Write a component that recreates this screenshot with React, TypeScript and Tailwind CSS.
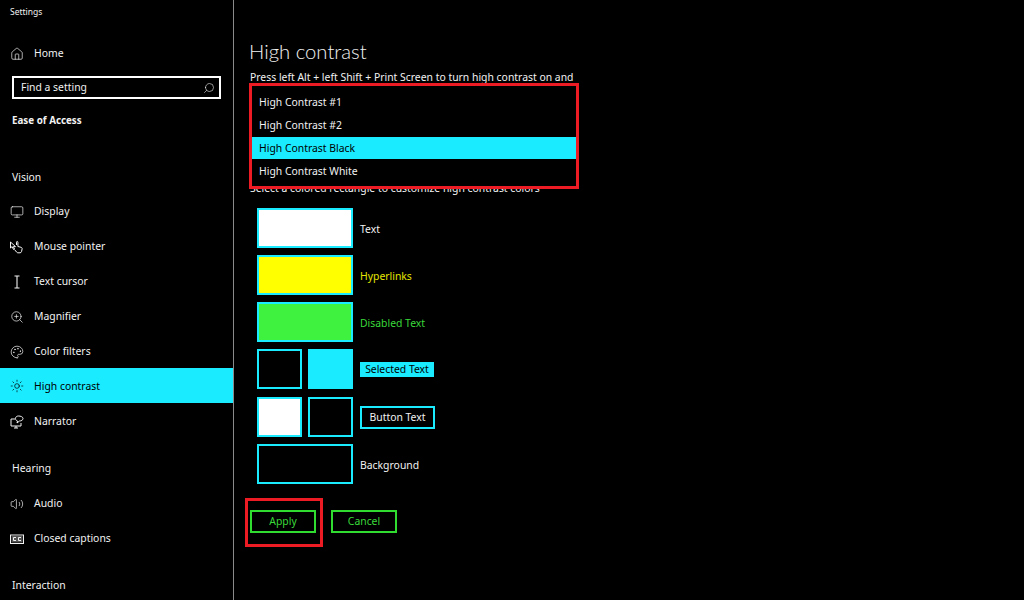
import type { ReactNode } from 'react';
import { House, Monitor, ZoomIn, Palette, Sun, Volume2, Search } from 'lucide-react';

function PointerIcon() {
  return (
    <svg width="14" height="14" viewBox="0 0 14 14" fill="none" stroke="currentColor" strokeWidth="1">
      <path d="M0.500 2v6l1.600-1.400L3.500 9.500l1-.5-1.200-2.400h2.200z" />
      <path d="M6.500 5V2.200c0-1 1.400-1 1.400 0V6.500l3.200.8c.9.3 1.200.9 1 1.700l-.6 2.700c-.2.7-.8 1.100-1.500 1.100H8c-.6 0-1-.2-1.400-.7L4.500 9.500" />
    </svg>
  );
}

function CursorIcon() {
  return (
    <svg width="14" height="14" viewBox="0 0 14 14" fill="none" stroke="currentColor" strokeWidth="1.100">
      <path d="M4.500 1h5M7 1v12M4.500 13h5" />
    </svg>
  );
}

function NarratorIcon() {
  return (
    <svg width="14" height="14" viewBox="0 0 14 14" fill="none" stroke="currentColor" strokeWidth="1">
      <path d="M5 4H1v7h10V8" />
      <path d="M4 13h4M6 11v2" />
      <path d="M8.500 1C6.800 1 5.500 2 5.500 3.500S6.800 6 7.500 6L7 8l2.500-2c1.700 0 3.500-.8 3.500-2.500S10.500 1 8.500 1z" />
    </svg>
  );
}

function CaptionsIcon() {
  return (
    <svg width="14" height="14" viewBox="0 0 14 14" fill="none" stroke="currentColor" strokeWidth="1">
      <rect x="0.500" y="3" width="13" height="8.500" />
      <rect x="1.500" y="4" width="11" height="6.500" fill="currentColor" fillOpacity="0.35" stroke="none" />
      <path d="M6 5.500H3.500v3H6M11 5.500H8.500v3H11" />
    </svg>
  );
}

function NavRow({ icon, label, active }: { icon: ReactNode; label: string; active?: boolean }) {
  return (
    <div className={`flex h-[35px] items-center gap-[10px] pl-[10px] ${active ? '-mt-px mb-px bg-[#1aebff] text-black' : ''}`}>
      <span className="flex w-[14px] justify-center">{icon}</span>
      <span className={active ? 'mt-[2px]' : ''}>{label}</span>
    </div>
  );
}

function GroupTitle({ children, className }: { children: ReactNode; className: string }) {
  return <div className={`flex h-[20px] items-center pl-[12px] ${className}`}>{children}</div>;
}

function Swatch({ color, wide }: { color: string; wide?: boolean }) {
  return <div className={`h-[40px] border-2 border-[#1aebff] ${wide ? 'w-[96px]' : 'w-[45px]'} ${color}`} />;
}

function SwatchRow({ children, label, className }: { children: ReactNode; label: ReactNode; className?: string }) {
  return (
    <div className={`flex h-[40px] items-center ${className ?? ''}`}>
      <div className="flex w-[96px] justify-between">{children}</div>
      <div className="ml-[7px]">{label}</div>
    </div>
  );
}

function PlainLabel({ children, color }: { children: ReactNode; color?: string }) {
  return <span className={`mt-[3px] block ${color ?? ''}`}>{children}</span>;
}

export default function App() {
  const schemes = ['High Contrast #1', 'High Contrast #2', 'High Contrast Black', 'High Contrast White'];

  return (
    <div className="flex h-[600px] w-[1024px] overflow-hidden bg-black text-[10.400px] text-[#f2f2f2] [font-family:'Noto_Sans',sans-serif]">
      <aside className="w-[234px] shrink-0 border-r border-[#8a8a8a]">
        <div className="flex h-[24px] items-center pl-[10px] text-[8.500px]">Settings</div>
        <div className="mt-[12px]">
          <NavRow icon={<House size={14} strokeWidth={1.2} />} label="Home" />
        </div>
        <div className="mx-[12px] mt-[5px] flex h-[23px] items-center justify-between border-2 border-white pl-[7px] pr-[4px]">
          <span>Find a setting</span>
          <Search size={12} strokeWidth={1.2} className="-scale-x-100" />
        </div>
        <div className="mt-[12px] flex h-[21px] items-center pl-[12px] text-[9.800px] font-bold">Ease of Access</div>
        <GroupTitle className="mt-[36px]">Vision</GroupTitle>
        <div className="mt-[6px]">
          <NavRow icon={<Monitor size={14} strokeWidth={1.2} />} label="Display" />
          <NavRow icon={<PointerIcon />} label="Mouse pointer" />
          <NavRow icon={<CursorIcon />} label="Text cursor" />
          <NavRow icon={<ZoomIn size={14} strokeWidth={1.2} />} label="Magnifier" />
          <NavRow icon={<Palette size={14} strokeWidth={1.2} />} label="Color filters" />
          <NavRow icon={<Sun size={14} strokeWidth={1.2} />} label="High contrast" active />
          <NavRow icon={<NarratorIcon />} label="Narrator" />
        </div>
        <GroupTitle className="mt-[20px]">Hearing</GroupTitle>
        <div className="mt-[7px]">
          <NavRow icon={<Volume2 size={14} strokeWidth={1.2} />} label="Audio" />
          <NavRow icon={<CaptionsIcon />} label="Closed captions" />
        </div>
        <GroupTitle className="mt-[20px]">Interaction</GroupTitle>
      </aside>

      <main className="relative flex-1 pl-[15px]">
        <h1 className="mt-[36px] h-[31px] text-[20.300px] font-light leading-[30px] [font-family:Lato,sans-serif]">High contrast</h1>
        <p className="ml-[1px] h-[20px] leading-[20px]">Press left Alt + left Shift + Print Screen to turn high contrast on and</p>
        <p className="ml-[1px] mt-[91px] h-[20px] leading-[20px]">Select a colored rectangle to customize high contrast colors</p>

        {/* red annotation and open dropdown lie over the paragraph text */}
        <div className="absolute left-[15px] top-[83px] h-[106px] w-[330px] border-[3px] border-[#ed1c24] bg-black pt-[5px]">
          {schemes.map((name) => (
            <div
              key={name}
              className={`flex items-center pl-[7px] ${name === 'High Contrast Black' ? 'mb-px h-[22px] bg-[#1aebff] pt-[2px] text-black' : 'h-[23px]'}`}
            >
              {name}
            </div>
          ))}
        </div>

        <div className="ml-[8px] mt-[10px] flex flex-col gap-[7px]">
          <SwatchRow label={<PlainLabel>Text</PlainLabel>}>
            <Swatch color="bg-white" wide />
          </SwatchRow>
          <SwatchRow label={<PlainLabel color="text-[#e6e600]">Hyperlinks</PlainLabel>}>
            <Swatch color="bg-[#ffff00]" wide />
          </SwatchRow>
          <SwatchRow label={<PlainLabel color="text-[#3ad93a]">Disabled Text</PlainLabel>}>
            <Swatch color="bg-[#3ff23f]" wide />
          </SwatchRow>
          <SwatchRow label={<span className="mt-px flex h-[15px] w-[74px] items-center justify-center bg-[#1aebff] pt-px text-black">Selected Text</span>}>
            <Swatch color="bg-black" />
            <Swatch color="bg-[#1aebff]" />
          </SwatchRow>
          <SwatchRow className="mt-px" label={<span className="flex h-[23px] w-[75px] items-center justify-center border-2 border-[#1aebff] pt-px">Button Text</span>}>
            <Swatch color="bg-white" />
            <Swatch color="bg-black" />
          </SwatchRow>
          <SwatchRow label={<PlainLabel>Background</PlainLabel>}>
            <Swatch color="bg-black" wide />
          </SwatchRow>
        </div>

        <div className="ml-[1px] mt-[26px] flex gap-[15px] text-[#3ad93a]">
          <div className="flex h-[23px] w-[66px] items-center justify-center border-2 border-[#2fdc2f] pt-px">Apply</div>
          <div className="flex h-[23px] w-[66px] items-center justify-center border-2 border-[#2fdc2f] pt-px">Cancel</div>
        </div>
        {/* red annotation round Apply */}
        <div className="absolute left-[11px] top-[498px] h-[49px] w-[78px] border-[3px] border-[#ed1c24]" />
      </main>
    </div>
  );
}
